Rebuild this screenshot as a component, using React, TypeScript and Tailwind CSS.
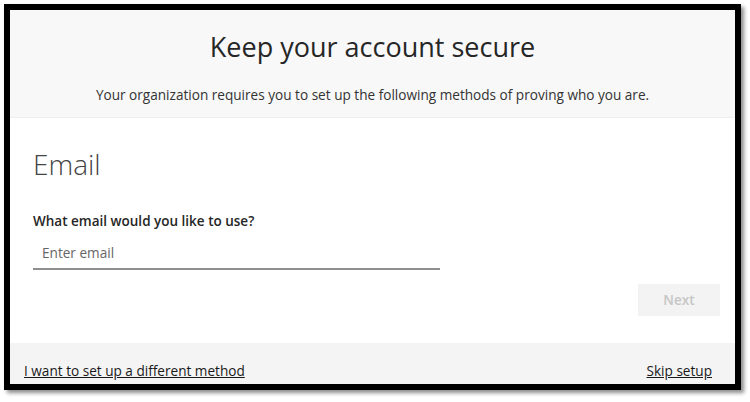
import React from 'react';

const font = { fontFamily: '"Open Sans", "Noto Sans", "Liberation Sans", sans-serif' };

const App: React.FC = () => {
  return (
    <div className="w-[750px] h-[402px] bg-white pt-[4px] pl-[4px]" style={font}>
      <div className="w-[737px] h-[386px] border-[6px] border-black shadow-[3px_3px_4px_rgba(0,0,0,0.45)] flex flex-col bg-white">
        {/* header */}
        <div className="h-[108px] bg-[#f8f8f8] border-b border-[#efefef] flex flex-col items-center pt-[21px]">
          <h1 className="text-[27px] leading-[32px] text-[#262626]">Keep your account secure</h1>
          <p className="mt-[22px] text-[13.6px] leading-[20px] text-[#333]">
            Your organization requires you to set up the following methods of proving who you are.
          </p>
        </div>

        {/* body */}
        <div className="flex-1 flex flex-col px-[23px] pt-[28px]">
          <h2 className="text-[28px] leading-[36px] font-light text-[#444]">Email</h2>
          <label className="mt-[29px] text-[13.5px] leading-[20px] font-semibold text-[#262626]">
            What email would you like to use?
          </label>
          <div className="mt-[9px] w-[407px] border-b-2 border-[#8f8f8f] pl-[9px] pb-[4px]">
            <span className="text-[13.6px] leading-[20px] text-[#666]">Enter email</span>
          </div>
          <div className="mt-[14px] flex justify-end -mr-[8px]">
            <button className="w-[82px] h-[32px] bg-[#f3f3f3] text-[13.6px] font-semibold text-[#c6c6c6]">
              Next
            </button>
          </div>
        </div>

        {/* footer */}
        <div className="h-[41px] bg-[#f4f4f4] flex items-end justify-between pl-[14px] pr-[23px] pb-[3px]">
          <a className="text-[13.6px] leading-[20px] text-[#1a1a1a] underline">I want to set up a different method</a>
          <a className="text-[13.6px] leading-[20px] text-[#1a1a1a] underline">Skip setup</a>
        </div>
      </div>
    </div>
  );
};

export default App;
